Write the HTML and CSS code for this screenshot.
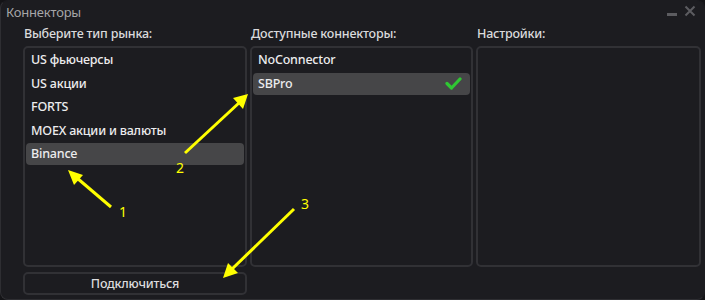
FILE: index.html
```html
<!DOCTYPE html>
<html lang="ru">
<head>
<meta charset="utf-8">
<link rel="stylesheet" href="styles.css">
</head>
<body>
<div class="window">
  <div class="titlebar">
    <span class="title">Коннекторы</span>
    <div class="controls">
      <span class="minimize"></span>
      <svg class="close" width="12" height="12" viewBox="0 0 12 12"><path d="M1.5 1.5 L10.5 10.5 M10.5 1.5 L1.5 10.5" stroke="#5c5c60" stroke-width="2" fill="none"/></svg>
    </div>
  </div>
  <div class="content">
    <div class="col">
      <div class="label">Выберите тип рынка:</div>
      <div class="box">
        <div class="item">US фьючерсы</div>
        <div class="item">US акции</div>
        <div class="item">FORTS</div>
        <div class="item">MOEX акции и валюты</div>
        <div class="item selected">Binance</div>
      </div>
      <div class="button">Подключиться</div>
    </div>
    <div class="col">
      <div class="label">Доступные коннекторы:</div>
      <div class="box">
        <div class="item">NoConnector</div>
        <div class="item selected">SBPro
          <svg class="check" width="17" height="13" viewBox="0 0 17 13"><path d="M2 6.5 L6.5 11 L15 2" stroke="#2fc733" stroke-width="3.2" fill="none" stroke-linecap="round" stroke-linejoin="round"/></svg>
        </div>
      </div>
    </div>
    <div class="col">
      <div class="label">Настройки:</div>
      <div class="box"></div>
    </div>
  </div>
  <svg class="annotations" width="705" height="300" viewBox="0 0 705 300">
    <g stroke="#ffff00" stroke-width="3" stroke-linecap="butt">
      <line x1="111" y1="206" x2="77" y2="177"/>
      <line x1="185" y1="152" x2="240" y2="101"/>
      <line x1="294" y1="208" x2="231" y2="269"/>
    </g>
    <g fill="#ffff00">
      <polygon points="68,169 83,174 74,184"/>
      <polygon points="248,93 243,108 233,97"/>
      <polygon points="223,277 228,262 238,272"/>
    </g>
    <g fill="#ffff00" font-family="'Noto Sans', sans-serif" font-size="14" text-anchor="middle">
      <text x="123" y="216">1</text>
      <text x="180" y="172">2</text>
      <text x="305" y="208">3</text>
    </g>
  </svg>
</div>
</body>
</html>
```
FILE: styles.css
```css
html, body {
  margin: 0;
  padding: 0;
  background: #141417;
}
body {
  width: 705px;
  height: 300px;
  overflow: hidden;
  font-family: "Noto Sans", "Open Sans", sans-serif;
}
.window {
  position: relative;
  width: 705px;
  height: 300px;
  box-sizing: border-box;
  border: 1px solid #2e2e32;
  border-top-color: #1c1c20;
  border-right-color: #1c1c20;
  border-radius: 8px;
  background: #1c1c20;
  display: flex;
  flex-direction: column;
}
.titlebar {
  height: 25px;
  display: flex;
  align-items: center;
  justify-content: space-between;
  padding: 0 8px 0 5px;
  box-sizing: border-box;
}
.title {
  color: #a6a6a8;
  font-size: 13px;
  letter-spacing: -0.2px;
  line-height: 16px;
  margin-top: -3px;
}
.controls {
  display: flex;
  align-items: center;
  gap: 7px;
  margin-top: -5px;
}
.minimize {
  display: block;
  width: 10px;
  height: 3px;
  background: #5c5c60;
  margin-top: 6px;
}
.content {
  display: grid;
  grid-template-columns: 224px 223px 225px;
  column-gap: 3px;
  padding-left: 22px;
}
.col {
  display: flex;
  flex-direction: column;
}
.label {
  color: #dadadc;
  font-size: 12.5px;
  letter-spacing: -0.2px;
  font-weight: 500;
  line-height: 16px;
  height: 16px;
  margin-bottom: 4px;
  padding-left: 1px;
}
.box {
  height: 221px;
  box-sizing: border-box;
  border: 2px solid #313135;
  border-radius: 5px;
  padding: 1px;
  display: flex;
  flex-direction: column;
  gap: 1.5px;
}
.item {
  height: 22px;
  line-height: 22px;
  padding-left: 5px;
  padding-right: 8px;
  color: #ececee;
  font-size: 12.5px;
  letter-spacing: -0.2px;
  font-weight: 500;
  border-radius: 4px;
  display: flex;
  align-items: center;
  justify-content: space-between;
}
.item.selected {
  background: #464648;
}
.check {
  display: block;
}
.button {
  margin-top: 5px;
  height: 23px;
  box-sizing: border-box;
  border: 2px solid #313135;
  border-radius: 5px;
  color: #dcdcde;
  font-size: 12.5px;
  letter-spacing: -0.2px;
  font-weight: 500;
  display: flex;
  align-items: center;
  justify-content: center;
}
.annotations {
  position: absolute;
  left: -1px;
  top: 0;
  pointer-events: none;
}
```
